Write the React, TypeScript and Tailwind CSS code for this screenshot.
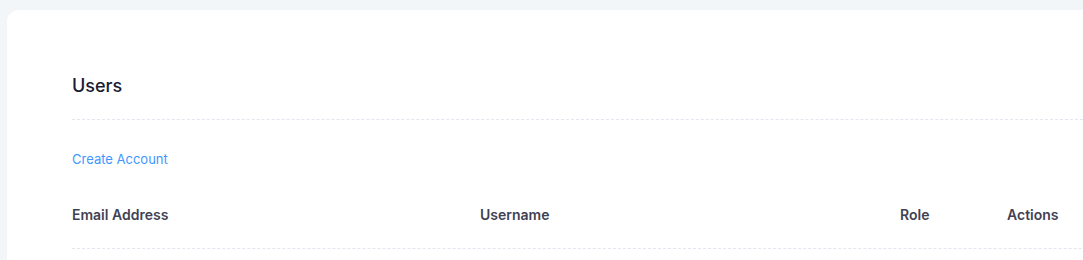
export default function App() {
  const columns = ['Email Address', 'Username', 'Role', 'Actions'];

  return (
    <div className="min-h-screen bg-[#f3f6f9] pt-[10px] pl-[7px] font-['Inter',sans-serif] overflow-hidden">
      <div className="bg-white rounded-tl-xl min-h-[260px] pl-[65px]">
        <div className="pt-[64px] pb-[21px] border-b border-dashed border-[#e4e6ef]">
          <h3 className="text-[18px] leading-6 font-medium text-[#181c32]">Users</h3>
        </div>
        <div className="pt-[26px]">
          <a href="#" className="text-[13px] leading-5 text-[#3e97ff]">
            Create Account
          </a>
        </div>
        <div className="mt-[11px] grid grid-cols-[408px_420px_107px_200px] pt-6 pb-[23px] border-b border-dashed border-[#e4e6ef] w-[1200px]">
          {columns.map((col) => (
            <div key={col} className="text-[14px] leading-5 font-semibold text-[#3f4254]">
              {col}
            </div>
          ))}
        </div>
      </div>
    </div>
  );
}
